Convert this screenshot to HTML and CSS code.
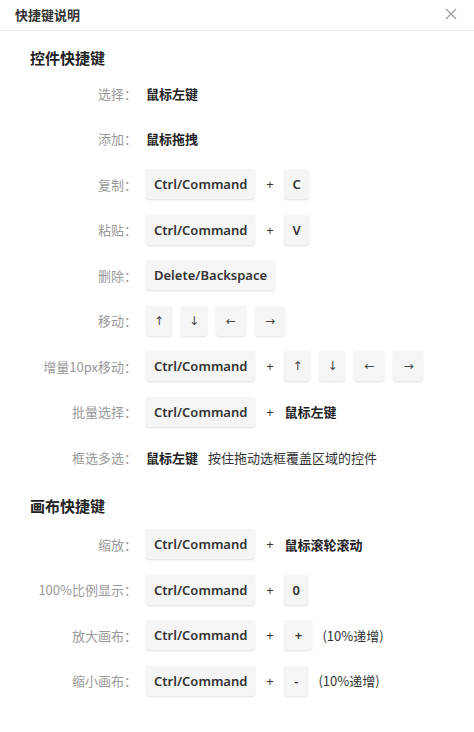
FILE: index.html
```html
<!DOCTYPE html>
<html lang="zh-CN">
<head>
<meta charset="utf-8">
<title>快捷键说明</title>
<link rel="stylesheet" href="styles.css">
</head>
<body>
<div class="dialog">
  <div class="header">
    <span class="header-title">快捷键说明</span>
    <svg class="close" width="12" height="12" viewBox="0 0 12 12"><path d="M1 1L11 11M11 1L1 11" stroke="#9a9a9a" stroke-width="1.1" fill="none"/></svg>
  </div>
  <div class="body">
    <h2 class="section-title">控件快捷键</h2>
    <div class="rows">
      <div class="row"><span class="label">选择：</span><div class="value"><span class="text-strong">鼠标左键</span></div></div>
      <div class="row"><span class="label">添加：</span><div class="value"><span class="text-strong">鼠标拖拽</span></div></div>
      <div class="row"><span class="label">复制：</span><div class="value"><kbd class="key">Ctrl/Command</kbd><span class="plus">+</span><kbd class="key">C</kbd></div></div>
      <div class="row"><span class="label">粘贴：</span><div class="value"><kbd class="key">Ctrl/Command</kbd><span class="plus">+</span><kbd class="key">V</kbd></div></div>
      <div class="row"><span class="label">删除：</span><div class="value"><kbd class="key">Delete/Backspace</kbd></div></div>
      <div class="row"><span class="label">移动：</span><div class="value arrows"><kbd class="key arrow narrow">↑</kbd><kbd class="key arrow narrow">↓</kbd><kbd class="key arrow">←</kbd><kbd class="key arrow">→</kbd></div></div>
      <div class="row"><span class="label">增量10px移动：</span><div class="value"><kbd class="key">Ctrl/Command</kbd><span class="plus">+</span><div class="arrows"><kbd class="key arrow narrow">↑</kbd><kbd class="key arrow narrow">↓</kbd><kbd class="key arrow">←</kbd><kbd class="key arrow">→</kbd></div></div></div>
      <div class="row"><span class="label">批量选择：</span><div class="value"><kbd class="key">Ctrl/Command</kbd><span class="plus">+</span><span class="text-strong">鼠标左键</span></div></div>
      <div class="row"><span class="label">框选多选：</span><div class="value"><span class="text-strong">鼠标左键</span><span class="text-note">按住拖动选框覆盖区域的控件</span></div></div>
    </div>
    <h2 class="section-title second">画布快捷键</h2>
    <div class="rows">
      <div class="row"><span class="label">缩放：</span><div class="value"><kbd class="key">Ctrl/Command</kbd><span class="plus">+</span><span class="text-strong">鼠标滚轮滚动</span></div></div>
      <div class="row"><span class="label">100%比例显示：</span><div class="value"><kbd class="key">Ctrl/Command</kbd><span class="plus">+</span><kbd class="key">0</kbd></div></div>
      <div class="row"><span class="label">放大画布：</span><div class="value"><kbd class="key">Ctrl/Command</kbd><span class="plus">+</span><kbd class="key plus-key">+</kbd><span class="text-note">(10%递增)</span></div></div>
      <div class="row"><span class="label">缩小画布：</span><div class="value"><kbd class="key">Ctrl/Command</kbd><span class="plus">+</span><kbd class="key minus">-</kbd><span class="text-note">(10%递增)</span></div></div>
    </div>
  </div>
</div>
</body>
</html>
```

FILE: styles.css
```css
* { box-sizing: border-box; }
html, body {
  margin: 0;
  padding: 0;
  background: #fff;
}
body {
  font-family: "Noto Sans", "Noto Sans CJK SC", sans-serif;
  color: #333;
  width: 474px;
  height: 732px;
  overflow: hidden;
}
.header {
  height: 31px;
  border-bottom: 1px solid #ececec;
  display: flex;
  align-items: center;
  justify-content: space-between;
  padding: 0 17px 2px 15px;
}
.header-title {
  font-size: 13px;
  font-weight: 700;
  color: #333;
  font-family: "Noto Sans CJK SC", sans-serif;
}
.close { display: block; }
.body {
  padding: 0 0 0 30px;
}
.section-title {
  margin: 0;
  font-family: "Noto Sans CJK SC", sans-serif;
  font-size: 15px;
  font-weight: 700;
  color: #222;
  height: 22px;
  line-height: 22px;
  margin-top: 16px;
  margin-bottom: 9px;
}
.section-title.second {
  margin-top: 23px;
  margin-bottom: 12px;
}
.rows {
  display: flex;
  flex-direction: column;
  gap: 15.5px;
}
.row {
  display: flex;
  align-items: center;
  height: 30px;
}
.label {
  width: 107px;
  text-align: right;
  font-size: 13px;
  color: #999;
  font-family: "Noto Sans CJK SC", sans-serif;
  margin-right: 9px;
  white-space: nowrap;
}
.value {
  display: flex;
  align-items: center;
  font-size: 13px;
}
.arrows {
  display: flex;
  align-items: center;
  gap: 9px;
}
.key {
  display: inline-flex;
  align-items: center;
  justify-content: center;
  height: 30px;
  padding: 0 8px;
  background: #f5f5f5;
  border-radius: 3px;
  box-shadow: 0 1px 2px rgba(0, 0, 0, 0.12);
  font-family: "Noto Sans", "Noto Sans CJK SC", sans-serif;
  font-size: 13px;
  font-weight: 600;
  color: #333;
}
.key.arrow {
  font-family: "DejaVu Sans", sans-serif;
  font-weight: 400;
  font-size: 12px;
  width: 30px;
  padding: 0;
  color: #444;
}
.key.arrow.narrow { width: 26px; }
.key.plus-key { width: 28px; padding: 0; }
.key.minus { width: 24px; padding: 0; }
.plus {
  width: 29px;
  text-align: center;
  font-size: 13px;
  color: #333;
}
.text-strong {
  font-family: "Noto Sans CJK SC", sans-serif;
  font-weight: 700;
  font-size: 13px;
  color: #222;
}
.text-note {
  font-family: "Noto Sans CJK SC", sans-serif;
  font-size: 13px;
  color: #333;
  margin-left: 10px;
}
```
